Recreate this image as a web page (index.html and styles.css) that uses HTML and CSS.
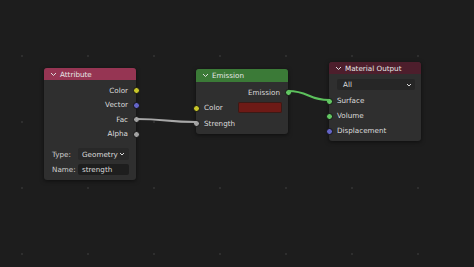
FILE: index.html
```html
<!DOCTYPE html>
<html lang="en">
<head>
  <meta charset="UTF-8" />
  <title>Shader Nodes</title>
  <link rel="stylesheet" href="styles.css">
</head>
<body>
  <div class="editor">

    <!-- links -->
    <svg class="links" width="474" height="267">
      <path d="M136 119 C166 119 166 122 196 122" class="link-gray" />
      <path d="M288 91 C309 91 308 100 329 100" class="link-green" />
    </svg>

    <!-- Attribute -->
    <div class="node node-attr">
      <div class="node-head head-attr">
        <svg class="chev" width="7" height="5"><polyline points="1,1 3.5,3.5 6,1" /></svg>
        Attribute
      </div>
      <div class="node-body">
        <div class="row out">Color<span class="sock yellow"></span></div>
        <div class="row out">Vector<span class="sock purple"></span></div>
        <div class="row out">Fac<span class="sock gray"></span></div>
        <div class="row out">Alpha<span class="sock gray"></span></div>
        <div class="props">
          <div class="prop">
            <span class="prop-label">Type:</span>
            <span class="field select">Geometry
              <svg class="chev-sm" width="6" height="4"><polyline points="1,1 3,3 5,1" /></svg>
            </span>
          </div>
          <div class="prop">
            <span class="prop-label">Name:</span>
            <span class="field text">strength</span>
          </div>
        </div>
      </div>
    </div>

    <!-- Emission -->
    <div class="node node-emit">
      <div class="node-head head-emit">
        <svg class="chev" width="7" height="5"><polyline points="1,1 3.5,3.5 6,1" /></svg>
        Emission
      </div>
      <div class="node-body">
        <div class="row out">Emission<span class="sock green"></span></div>
        <div class="row in color-row">
          <span class="sock yellow"></span>Color
          <span class="swatch"></span>
        </div>
        <div class="row in"><span class="sock gray"></span>Strength</div>
      </div>
    </div>

    <!-- Material Output -->
    <div class="node node-mat">
      <div class="node-head head-mat">
        <svg class="chev" width="7" height="5"><polyline points="1,1 3.5,3.5 6,1" /></svg>
        Material Output
      </div>
      <div class="node-body">
        <div class="field select wide">All
          <svg class="chev-sm" width="6" height="4"><polyline points="1,1 3,3 5,1" /></svg>
        </div>
        <div class="row in"><span class="sock green"></span>Surface</div>
        <div class="row in"><span class="sock green"></span>Volume</div>
        <div class="row in"><span class="sock purple"></span>Displacement</div>
      </div>
    </div>

  </div>
</body>
</html>
```

FILE: styles.css
```css
body {
  margin: 0;
  background: #1d1d1d;
  font-family: 'DejaVu Sans', sans-serif;
  font-size: 7.2px;
  color: #dcdcdc;
}

.editor {
  position: relative;
  width: 474px;
  height: 267px;
  overflow: hidden;
  background-color: #1d1d1d;
  background-image: radial-gradient(circle, #2e2e2e 0.9px, transparent 1.3px);
  background-size: 66px 66px;
  background-position: -11px 23px;
}

.links {
  position: absolute;
  left: 0;
  top: 0;
  z-index: 2;
  pointer-events: none;
}

.links path {
  fill: none;
  stroke-width: 2;
}

.link-gray {
  stroke: #a8a8a8;
}

.link-green {
  stroke: #5cc05c;
}

/* nodes */
.node {
  position: absolute;
  width: 92px;
  background: #2f2f2f;
  border-radius: 3px;
  box-shadow: 0 1px 4px rgba(0,0,0,0.55);
}

.node-attr { left: 44px; top: 68px; height: 112px; }
.node-emit { left: 196px; top: 69px; height: 65px; }
.node-mat  { left: 329px; top: 62px; height: 79px; }

.node-head {
  display: flex;
  align-items: center;
  gap: 3px;
  height: 12px;
  padding-left: 6px;
  border-radius: 3px 3px 0 0;
  color: #e6e6e6;
}

.head-attr { background: #963553; }
.head-emit { background: #3b7a37; height: 13px; }
.head-mat  { background: #4d1e2c; }

.chev polyline, .chev-sm polyline {
  fill: none;
  stroke: #dddddd;
  stroke-width: 1;
}

.node-body {
  display: flex;
  flex-direction: column;
  padding-top: 3px;
}

.row {
  position: relative;
  display: flex;
  align-items: center;
  height: 14.5px;
}

.row.out {
  justify-content: flex-end;
  padding-right: 8px;
}

.row.in {
  padding-left: 8px;
}

.sock {
  position: absolute;
  top: calc(50% - 3px);
  width: 5px;
  height: 5px;
  border-radius: 50%;
  border: 0.7px solid #111;
}

.row.out .sock { right: -3.5px; }
.row.in .sock { left: -3.5px; }

.yellow { background: #c8c62a; }
.purple { background: #6465c8; }
.gray   { background: #a2a2a2; }
.green  { background: #63c763; }

.swatch {
  margin-left: auto;
  margin-right: 6px;
  width: 44px;
  height: 11px;
  border-radius: 2px;
  background: #6d1a16;
  box-shadow: inset 0 0 0 1px #3a1a16;
}

.node-emit .row.out { height: 14px; }
.node-emit .color-row { height: 17px; }

/* properties */
.props {
  display: flex;
  flex-direction: column;
  gap: 4px;
  margin-top: 7px;
  padding: 0 7px 0 8px;
}

.prop {
  display: flex;
  align-items: center;
}

.prop-label {
  width: 26px;
  color: #cfcfcf;
}

.field {
  display: flex;
  align-items: center;
  height: 12px;
  padding: 0 4px;
  border-radius: 2px;
  flex: 1;
}

.field.select {
  background: #282828;
  justify-content: space-between;
}

.field.text {
  background: #1e1e1e;
  height: 11px;
}

.field.wide {
  flex: none;
  margin: 2px 6px 3px 8px;
  height: 11px;
  padding: 0 3px 0 6px;
  background: #262626;
}

.node-mat .row { height: 15px; }
```
